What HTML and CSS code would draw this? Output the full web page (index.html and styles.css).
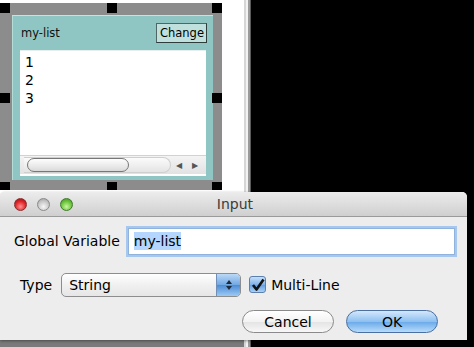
FILE: index.html
```html
<!DOCTYPE html>
<html lang="en">
<head>
  <meta charset="UTF-8">
  <title>Input</title>
  <link rel="stylesheet" href="styles.css">
</head>
<body>
  <div class="desk">
    <div class="canvas">
      <div class="frame">
        <span class="handle h-tl"></span>
        <span class="handle h-tm"></span>
        <span class="handle h-tr"></span>
        <span class="handle h-ml"></span>
        <span class="handle h-mr"></span>
        <span class="handle h-bl"></span>
        <span class="handle h-bm"></span>
        <span class="handle h-br"></span>

        <div class="widget">
          <div class="widget-head">
            <span class="widget-name">my-list</span>
            <span class="change-btn">Change</span>
          </div>
          <div class="list-box">
            <div class="list-lines">
              <div>1</div>
              <div>2</div>
              <div>3</div>
            </div>
            <div class="hscroll">
              <div class="track">
                <div class="thumb"></div>
              </div>
              <span class="arrow">&#9664;</span>
              <span class="arrow">&#9654;</span>
            </div>
          </div>
        </div>
      </div>
    </div>
    <div class="divider"></div>
    <div class="dark"></div>
  </div>

  <div class="dialog">
    <div class="titlebar">
      <div class="lights">
        <span class="light red"></span>
        <span class="light grey"></span>
        <span class="light green"></span>
      </div>
      <span class="title">Input</span>
    </div>

    <div class="dialog-body">
      <div class="row row-var">
        <label class="lbl">Global Variable</label>
        <div class="field"><span class="sel">my-list</span></div>
      </div>

      <div class="row row-type">
        <label class="lbl">Type</label>
        <div class="popup">
          <span class="popup-text">String</span>
          <span class="stepper">
            <svg width="8" height="12" viewBox="0 0 8 12">
              <path d="M4 1 L7 5 L1 5 Z" fill="#1d2a3a"/>
              <path d="M4 11 L7 7 L1 7 Z" fill="#1d2a3a"/>
            </svg>
          </span>
        </div>
        <span class="check">
          <svg width="14" height="14" viewBox="0 0 14 14">
            <path d="M2 7 L5.5 11.5 L12.5 1.5" fill="none" stroke="#111" stroke-width="2.6" stroke-linejoin="round"/>
          </svg>
        </span>
        <span class="check-label">Multi-Line</span>
      </div>

      <div class="row row-buttons">
        <span class="btn">Cancel</span>
        <span class="btn btn-ok">OK</span>
      </div>
    </div>
  </div>
</body>
</html>
```

FILE: styles.css
```css
html, body {
  margin: 0;
  padding: 0;
}

body {
  width: 474px;
  height: 347px;
  overflow: hidden;
  position: relative;
  font-family: "DejaVu Sans", sans-serif;
  background: #000;
}

.desk {
  display: flex;
  height: 347px;
}

.canvas {
  width: 244px;
  background: linear-gradient(#fff 0, #fff 340px, #7a7a7a 340px);
  padding-top: 3px;
  box-sizing: border-box;
}

.divider {
  width: 7px;
  background: linear-gradient(to right, #d6d6d6 0, #d6d6d6 2px, #f2f2f2 2px, #f2f2f2 4px, #9a9a9a 4px, #9a9a9a 6px, #5a5a5a 6px);
}

.dark {
  flex: 1;
  background: #000;
}

/* selection frame round the widget */
.frame {
  position: relative;
  width: 222px;
  height: 187px;
  background: #8c8c8c;
  padding: 12px 9px 10px 12px;
  box-sizing: border-box;
}

.handle {
  position: absolute;
  width: 10px;
  height: 10px;
  background: #000;
}
.h-tl { left: 0; top: 0; }
.h-tm { left: 107px; top: 0; }
.h-tr { right: 0; top: 0; }
.h-ml { left: 0; top: 90px; }
.h-mr { right: 0; top: 90px; }
.h-bl { left: 0; bottom: 0; height: 8px; }
.h-bm { left: 107px; bottom: 0; height: 8px; }
.h-br { right: 0; bottom: 0; height: 8px; }

.widget {
  height: 100%;
  background: #8fc6c3;
  border-top: 1px solid #c4e4e1;
  border-left: 1px solid #b5dcd9;
  box-sizing: border-box;
  padding: 6px 6px 4px 7px;
  display: flex;
  flex-direction: column;
}

.widget-head {
  display: flex;
  justify-content: space-between;
  align-items: center;
  height: 21px;
  margin-bottom: 7px;
}

.widget-name {
  font-size: 11.5px;
  color: #111;
  margin-left: 1px;
}

.change-btn {
  font-size: 11.5px;
  color: #000;
  background: #bfe0dc;
  border: 1px solid #4f6665;
  border-right-color: #2e3d3c;
  border-bottom-color: #2e3d3c;
  padding: 3px 2px 2px 3px;
  line-height: 13px;
}

.list-box {
  flex: 1;
  background: #fff;
  border-top: 1px solid #e6eeee;
  margin-right: 1px;
  display: flex;
  flex-direction: column;
}

.list-lines {
  flex: 1;
  padding: 2px 0 0 5px;
  font-size: 14px;
  line-height: 18px;
  color: #000;
}

.hscroll {
  height: 18px;
  display: flex;
  align-items: center;
  background: linear-gradient(#f4f4f4, #e2e2e2);
  border-top: 1px solid #d2d2d2;
  margin-bottom: 2px;
}

.track {
  width: 146px;
  height: 14px;
  margin-left: 4px;
  border: 1px solid #cfcfcf;
  border-left: none;
  border-radius: 0 8px 8px 0;
  background: linear-gradient(#fbfbfb, #e4e4e4);
}

.thumb {
  width: 100px;
  height: 12px;
  margin-left: 3px;
  border: 1px solid #777;
  border-radius: 7px;
  background: linear-gradient(#fdfdfd, #e9e9e9 60%, #d9d9d9);
}

.arrow {
  font-size: 8px;
  color: #555;
  width: 16px;
  text-align: center;
}

/* dialog window */
.dialog {
  position: absolute;
  left: 0;
  top: 192px;
  width: 467px;
  height: 148px;
  background: #ededed;
  border-radius: 5px 5px 0 0;
  box-shadow: 0 1px 3px rgba(0, 0, 0, 0.4);
  overflow: hidden;
}

.titlebar {
  height: 24px;
  background: linear-gradient(#ececec, #cfcfcf);
  border-bottom: 1px solid #9a9a9a;
  display: flex;
  align-items: center;
  position: relative;
}

.lights {
  display: flex;
  gap: 10px;
  margin-left: 14px;
}

.light {
  width: 13px;
  height: 13px;
  border-radius: 50%;
  box-sizing: border-box;
}
.red {
  background: radial-gradient(circle at 50% 70%, #ff8f8f, #e0262a 55%, #9b0a0a);
  border: 1px solid #8a2a2a;
}
.grey {
  background: radial-gradient(circle at 50% 70%, #f7f7f7, #c9c9c9 55%, #9a9a9a);
  border: 1px solid #8a8a8a;
}
.green {
  background: radial-gradient(circle at 50% 70%, #c9f7a0, #6cc53d 55%, #3d8a1b);
  border: 1px solid #3e7a2a;
}

.title {
  position: absolute;
  left: 0;
  right: 0;
  text-align: center;
  font-size: 14px;
  color: #3c3c3c;
  padding-left: 3px;
}

.dialog-body {
  padding: 10px 10px 0 14px;
}

.row {
  display: flex;
  align-items: center;
}

.lbl {
  font-size: 14px;
  color: #000;
}

.row-var {
  height: 28px;
}

.field {
  margin-left: 8px;
  width: 327px;
  height: 27px;
  box-sizing: border-box;
  background: #fff;
  border: 1px solid #8fb3dd;
  box-shadow: 0 0 0 2px #a6c8ee;
  padding-left: 5px;
  display: flex;
  align-items: center;
  font-size: 14px;
}

.sel {
  background: #b4d5fd;
  padding: 1px 0;
}

.row-type {
  margin-top: 17px;
  padding-left: 6px;
  height: 25px;
}

.popup {
  margin-left: 9px;
  width: 180px;
  height: 24px;
  box-sizing: border-box;
  border: 1px solid #8d8d8d;
  border-radius: 5px;
  background: linear-gradient(#ffffff, #f0f0f0 50%, #e6e6e6);
  display: flex;
  align-items: center;
  overflow: hidden;
}

.popup-text {
  flex: 1;
  font-size: 14px;
  padding-left: 7px;
}

.stepper {
  width: 23px;
  height: 100%;
  border-left: 1px solid #6f8fb8;
  background: linear-gradient(#bcd9f7, #6fa7e3 50%, #4d8cd6 51%, #9ccaf3);
  display: flex;
  align-items: center;
  justify-content: center;
}

.check {
  margin-left: 8px;
  width: 17px;
  height: 17px;
  box-sizing: border-box;
  border: 1px solid #5d7fae;
  border-radius: 3px;
  background: linear-gradient(#c6e0fa, #7fb2ea 50%, #5e9ae0 51%, #a9d2f6);
  display: flex;
  align-items: center;
  justify-content: center;
}

.check-label {
  margin-left: 5px;
  font-size: 14px;
}

.row-buttons {
  margin-top: 13px;
  justify-content: flex-end;
  gap: 12px;
  padding-right: 19px;
}

.btn {
  width: 92px;
  height: 23px;
  box-sizing: border-box;
  border: 1px solid #8a8a8a;
  border-radius: 12px;
  background: linear-gradient(#ffffff, #f3f3f3 50%, #e3e3e3 51%, #f8f8f8);
  font-size: 14px;
  display: flex;
  align-items: center;
  justify-content: center;
}

.btn-ok {
  border-color: #4a6fa0;
  background: linear-gradient(#d3e8fb, #8fc0f0 50%, #6aa8ea 51%, #b6dcfa);
}
```
